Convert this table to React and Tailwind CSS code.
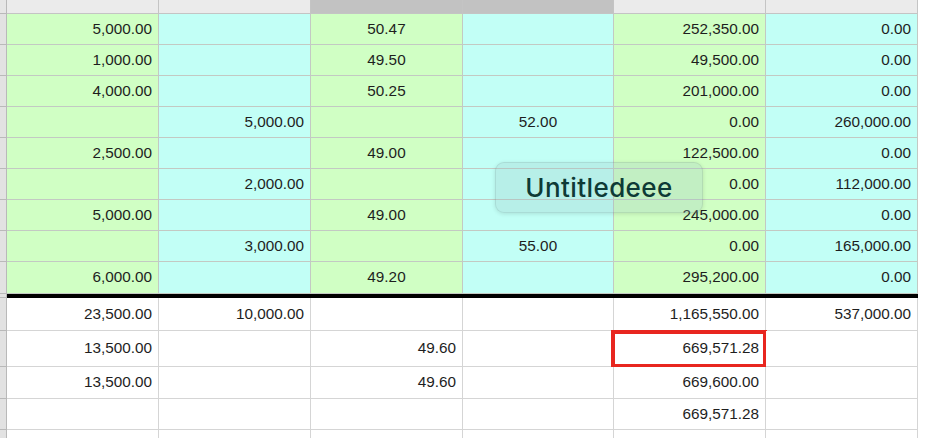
import React from 'react';

const GREEN = 'bg-[#d0ffc4]';
const CYAN = 'bg-[#c2fff6]';
const WIDTHS = ['w-[152px]', 'w-[152px]', 'w-[152px]', 'w-[151px]', 'w-[152px]', 'w-[152px]'];
const COLOR_ALIGN = ['justify-end', 'justify-end', 'justify-center', 'justify-center', 'justify-end', 'justify-end'];
const WHITE_ALIGN = ['justify-end', 'justify-end', 'justify-end', 'justify-center', 'justify-end', 'justify-end'];

const colored = [
    ['5,000.00', '', '50.47', '', '252,350.00', '0.00'],
    ['1,000.00', '', '49.50', '', '49,500.00', '0.00'],
    ['4,000.00', '', '50.25', '', '201,000.00', '0.00'],
    ['', '5,000.00', '', '52.00', '0.00', '260,000.00'],
    ['2,500.00', '', '49.00', '', '122,500.00', '0.00'],
    ['', '2,000.00', '', '', '0.00', '112,000.00'],
    ['5,000.00', '', '49.00', '', '245,000.00', '0.00'],
    ['', '3,000.00', '', '55.00', '0.00', '165,000.00'],
    ['6,000.00', '', '49.20', '', '295,200.00', '0.00'],
];

const totals = [
    { h: 'h-[33px]', cells: ['23,500.00', '10,000.00', '', '', '1,165,550.00', '537,000.00'] },
    { h: 'h-[36px]', cells: ['13,500.00', '', '49.60', '', '669,571.28', ''], boxed: 4 },
    { h: 'h-[32px]', cells: ['13,500.00', '', '49.60', '', '669,600.00', ''] },
    { h: 'h-[31px]', cells: ['', '', '', '', '669,571.28', ''] },
    { h: 'h-[31px]', cells: ['', '', '', '', '', ''] },
];

function Strip({ h }) {
    return <div className={`${h} w-[7px] shrink-0 bg-[#e2e2e2] border-r border-b border-[#b9b9b9]`} />;
}

function ColoredRow({ cells, h }) {
    return (
        <div className="flex">
            <Strip h={h} />
            {cells.map((v, i) => (
                <div
                    key={i}
                    className={`${WIDTHS[i]} ${h} shrink-0 flex items-center ${COLOR_ALIGN[i]} px-[6px] border-r border-b border-[#c3c9c3] ${i % 2 === 0 ? GREEN : CYAN}`}
                >
                    {v}
                </div>
            ))}
        </div>
    );
}

function TotalRow({ h, cells, boxed }) {
    return (
        <div className="flex">
            <Strip h={h} />
            {cells.map((v, i) => (
                <div
                    key={i}
                    className={`${WIDTHS[i]} ${h} shrink-0 relative flex items-center ${WHITE_ALIGN[i]} px-[6px] border-r border-b border-[#d5d5d5] bg-white`}
                >
                    {v}
                    {boxed === i && (
                        <div className="absolute left-[-3px] top-[-1px] w-[156px] h-[38px] border-4 border-[#e8261f]" />
                    )}
                </div>
            ))}
        </div>
    );
}

export default function App() {
    return (
        <div
            className="relative w-[934px] h-[438px] overflow-hidden bg-white text-[15.3px] text-[#1e1e1e]"
            style={{ fontFamily: '"Liberation Sans", Arial, sans-serif' }}
        >
            <div className="flex">
                <div className="h-[14px] w-[7px] shrink-0 bg-[#e6e6e6] border-r border-b border-[#b9b9b9]" />
                {WIDTHS.map((w, i) => (
                    <div
                        key={i}
                        className={`${w} h-[14px] shrink-0 border-r border-b border-[#c4c4c4] ${i === 2 || i === 3 ? 'bg-[#c2c2c2]' : 'bg-[#ebebeb]'}`}
                    />
                ))}
            </div>

            {colored.map((cells, r) => (
                <ColoredRow key={r} cells={cells} h={r === 8 ? 'h-[32px]' : 'h-[31px]'} />
            ))}

            <div className="flex">
                <Strip h="h-[4px]" />
                <div className="w-[911px] h-[4px] bg-black" />
            </div>

            {totals.map((row, r) => (
                <TotalRow key={r} {...row} />
            ))}

            <div
                className="absolute left-[495px] top-[162px] w-[208px] h-[51px] rounded-[9px] bg-[rgba(150,190,190,0.25)] border border-[rgba(0,0,0,0.08)] shadow-[0_1px_4px_rgba(0,0,0,0.12)] flex items-center justify-center"
            >
                <span
                    className="text-[26px] font-medium tracking-[0.4px] text-[#0e3a36]"
                    style={{ fontFamily: 'Inter, "Liberation Sans", sans-serif' }}
                >
                    Untitledeee
                </span>
            </div>
        </div>
    );
}
